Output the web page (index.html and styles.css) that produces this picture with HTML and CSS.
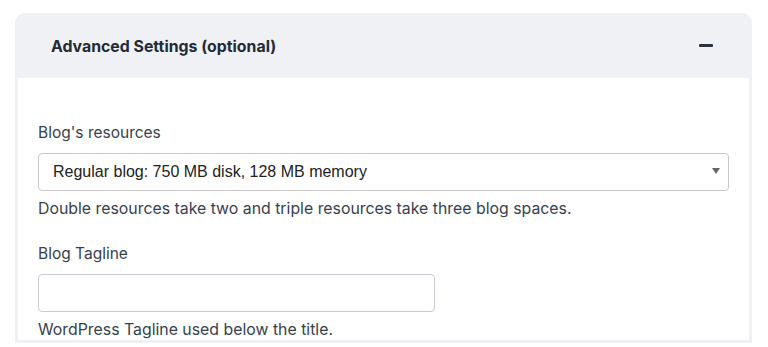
FILE: index.html
```html
<!DOCTYPE html>
<html>
<head>
<meta charset="utf-8">
<link rel="stylesheet" href="styles.css">
</head>
<body>
<div class="card">
  <div class="card-header">
    <span class="title">Advanced Settings (optional)</span>
    <span class="toggle" aria-label="collapse"></span>
  </div>
  <div class="card-body">
    <div class="field">
      <label class="label">Blog's resources</label>
      <div class="select">
        <span class="select-text">Regular blog: 750 MB disk, 128 MB memory</span>
        <span class="caret"></span>
      </div>
      <p class="help">Double resources take two and triple resources take three blog spaces.</p>
    </div>
    <div class="field">
      <label class="label">Blog Tagline</label>
      <div class="input"></div>
      <p class="help">WordPress Tagline used below the title.</p>
    </div>
  </div>
</div>
</body>
</html>
```
FILE: styles.css
```css
html, body {
  margin: 0;
  padding: 0;
  background: #ffffff;
}
body {
  font-family: Inter, "Noto Sans", sans-serif;
  color: #36414f;
  width: 768px;
  height: 347px;
  overflow: hidden;
}
.card {
  margin: 13px 0 0 15px;
  width: 737px;
  box-sizing: border-box;
  border: 3px solid #f0f1f4;
  border-top: 0;
  border-radius: 11px 11px 0 0;
  background: #fff;
}
.card-header {
  height: 65px;
  background: #f0f1f4;
  margin: 0 -3px;
  border-radius: 11px 11px 0 0;
  display: flex;
  align-items: center;
  justify-content: space-between;
  padding: 0 39px 0 36px;
}
.title {
  font-size: 15.85px;
  font-weight: 700;
  color: #232b35;
  padding-top: 2px;
}
.toggle {
  width: 14px;
  height: 3px;
  border-radius: 1px;
  background: #2a323c;
}
.card-body {
  padding: 44px 20px 0 20px;
}
.field + .field {
  margin-top: 24px;
}
.label {
  display: block;
  font-size: 15.5px;
  line-height: 21px;
  margin-bottom: 10px;
}
.select {
  height: 38px;
  box-sizing: border-box;
  border: 1px solid #c9c9c9;
  border-radius: 4px;
  display: flex;
  align-items: center;
  justify-content: space-between;
  padding: 0 8px 0 14px;
}
.select-text {
  font-family: "Liberation Sans", Arial, sans-serif;
  font-size: 16px;
  color: #222;
}
.caret {
  width: 0;
  height: 0;
  border-left: 4px solid transparent;
  border-right: 4px solid transparent;
  border-top: 6px solid #666;
  margin-top: -2px;
}
.input {
  width: 397px;
  height: 38px;
  box-sizing: border-box;
  border: 1px solid #c7ccd3;
  border-radius: 4px;
}
.help {
  margin: 7px 0 0;
  font-size: 15.85px;
  line-height: 21px;
}
```
